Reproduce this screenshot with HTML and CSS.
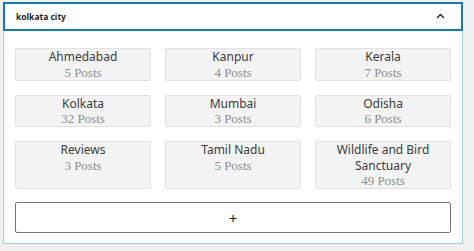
FILE: index.html
```html
<!DOCTYPE html>
<html lang="en">
<head>
  <meta charset="UTF-8">
  <title>Categories</title>
  <link rel="stylesheet" href="styles.css">
</head>
<body>

<div class="panel">
  <div class="panel-head">
    <span class="panel-title">kolkata city</span>
    <svg class="chevron" width="9" height="6" viewBox="0 0 9 6">
      <path d="M1 5 L4.5 1.5 L8 5" fill="none" stroke="#1e1e1e" stroke-width="1.3"/>
    </svg>
  </div>

  <div class="panel-body">
    <div class="cats">
      <div class="cat"><div class="cat-name">Ahmedabad</div><div class="cat-count">5 Posts</div></div>
      <div class="cat"><div class="cat-name">Kanpur</div><div class="cat-count">4 Posts</div></div>
      <div class="cat"><div class="cat-name">Kerala</div><div class="cat-count">7 Posts</div></div>
      <div class="cat"><div class="cat-name">Kolkata</div><div class="cat-count">32 Posts</div></div>
      <div class="cat"><div class="cat-name">Mumbai</div><div class="cat-count">3 Posts</div></div>
      <div class="cat"><div class="cat-name">Odisha</div><div class="cat-count">6 Posts</div></div>
      <div class="cat"><div class="cat-name">Reviews</div><div class="cat-count">3 Posts</div></div>
      <div class="cat"><div class="cat-name">Tamil Nadu</div><div class="cat-count">5 Posts</div></div>
      <div class="cat"><div class="cat-name">Wildlife and Bird Sanctuary</div><div class="cat-count">49 Posts</div></div>
    </div>

    <button class="add">+</button>
  </div>
</div>

</body>
</html>
```

FILE: styles.css
```css
body {
  margin: 0;
  padding: 2px 11px 0 3px;
  background: #f0f0f1;
  font-family: "Noto Sans", Arial, sans-serif;
}
.panel {
  width: 460px;
  background: #fff;
}
.panel-head {
  display: flex;
  align-items: center;
  justify-content: space-between;
  height: 25px;
  padding: 0 16px 0 11px;
  border: 2px solid #137ab5;
}
.panel-title {
  font-size: 8.5px;
  font-weight: bold;
  color: #1e1e1e;
}
.chevron {
  margin-top: -2px;
}
.panel-body {
  border: 1px solid #9fcfe3;
  border-top: none;
  padding: 17px 11px 10px 11px;
}
.cats {
  display: grid;
  grid-template-columns: repeat(3, 1fr);
  gap: 14px;
}
.cat {
  background: #f3f3f3;
  border: 1px solid #e2e2e2;
  border-radius: 2px;
  text-align: center;
  padding: 0 6px;
}
.cat-name {
  font-size: 12px;
  line-height: 15.5px;
  color: #3c3c3c;
}
.cat-count {
  font-family: "Liberation Serif", "Times New Roman", serif;
  font-size: 13px;
  line-height: 15px;
  color: #8e8e8e;
}
.add {
  display: block;
  width: 100%;
  height: 31px;
  margin-top: 13px;
  background: #fff;
  border: 1px solid #757575;
  border-radius: 2px;
  font-family: "Noto Sans", Arial, sans-serif;
  font-size: 15px;
  color: #1e1e1e;
  cursor: pointer;
}
```
